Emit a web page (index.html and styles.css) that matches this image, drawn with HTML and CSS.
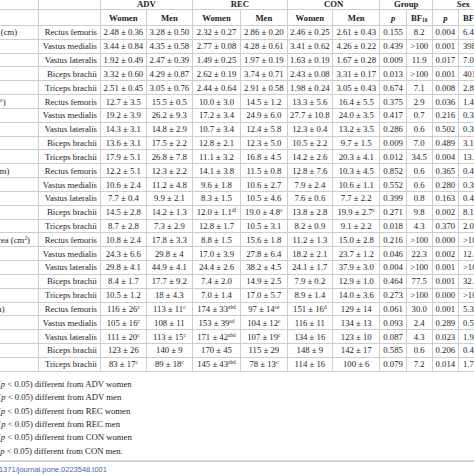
FILE: index.html
```html
<!DOCTYPE html>
<html lang="en">
<head>
<meta charset="utf-8">
<title>Muscle morphology table</title>
<link rel="stylesheet" href="styles.css">
</head>
<body>
<div class="sheet">
<table class="morph">
<colgroup>
<col class="c-label"><col class="c-muscle"><col class="c-w1"><col class="c-m1"><col class="c-w2"><col class="c-m2"><col class="c-w3"><col class="c-m3"><col class="c-p"><col class="c-bf"><col class="c-p2"><col class="c-bf2">
</colgroup>
<thead>
<tr class="h1"><th></th><th></th><th colspan="2">ADV</th><th colspan="2">REC</th><th colspan="2">CON</th><th colspan="2">Group</th><th colspan="2">Sex</th></tr>
<tr class="h2"><th></th><th></th><th>Women</th><th>Men</th><th>Women</th><th>Men</th><th>Women</th><th>Men</th><th><i>p</i></th><th>BF<sub>10</sub></th><th><i>p</i></th><th class="lft">BF<sub>10</sub></th></tr>
</thead>
<tbody>
<tr><td class="lbl">Muscle thickness (cm)</td><td class="mus">Rectus femoris</td><td>2.48 ± 0.36</td><td>3.28 ± 0.50</td><td>2.32 ± 0.27</td><td>2.86 ± 0.20</td><td>2.46 ± 0.25</td><td>2.61 ± 0.43</td><td>0.155</td><td>8.2</td><td>0.004</td><td class="lft">6.41</td></tr>
<tr><td class="lbl"></td><td class="mus">Vastus medialis</td><td>3.44 ± 0.84</td><td>4.35 ± 0.58</td><td>2.77 ± 0.08</td><td>4.28 ± 0.61</td><td>3.41 ± 0.62</td><td>4.26 ± 0.22</td><td>0.439</td><td>&gt;100</td><td>0.001</td><td class="lft">398</td></tr>
<tr><td class="lbl"></td><td class="mus">Vastus lateralis</td><td>1.92 ± 0.49</td><td>2.47 ± 0.39</td><td>1.49 ± 0.25</td><td>1.97 ± 0.19</td><td>1.63 ± 0.19</td><td>1.67 ± 0.28</td><td>0.009</td><td>11.9</td><td>0.017</td><td class="lft">7.06</td></tr>
<tr><td class="lbl"></td><td class="mus">Biceps brachii</td><td>3.32 ± 0.60</td><td>4.29 ± 0.87</td><td>2.62 ± 0.19</td><td>3.74 ± 0.71</td><td>2.43 ± 0.08</td><td>3.31 ± 0.17</td><td>0.013</td><td>&gt;100</td><td>0.001</td><td class="lft">401</td></tr>
<tr><td class="lbl"></td><td class="mus">Triceps brachii</td><td>2.51 ± 0.45</td><td>3.05 ± 0.76</td><td>2.44 ± 0.64</td><td>2.91 ± 0.58</td><td>1.98 ± 0.24</td><td>3.05 ± 0.43</td><td>0.674</td><td>7.1</td><td>0.008</td><td class="lft">2.83</td></tr>

<tr><td class="lbl">Pennation angle (°)</td><td class="mus">Rectus femoris</td><td>12.7 ± 3.5</td><td>15.5 ± 0.5</td><td>10.0 ± 3.0</td><td>14.5 ± 1.2</td><td>13.3 ± 5.6</td><td>16.4 ± 5.5</td><td>0.375</td><td>2.9</td><td>0.036</td><td class="lft">1.42</td></tr>
<tr><td class="lbl"></td><td class="mus">Vastus medialis</td><td>19.2 ± 3.9</td><td>26.2 ± 9.3</td><td>17.2 ± 3.4</td><td>24.9 ± 6.0</td><td>27.7 ± 10.8</td><td>24.0 ± 3.5</td><td>0.417</td><td>0.7</td><td>0.216</td><td class="lft">0.38</td></tr>
<tr><td class="lbl"></td><td class="mus">Vastus lateralis</td><td>14.3 ± 3.1</td><td>14.8 ± 2.9</td><td>10.7 ± 3.4</td><td>12.4 ± 5.8</td><td>12.3 ± 0.4</td><td>13.2 ± 3.5</td><td>0.286</td><td>0.6</td><td>0.502</td><td class="lft">0.31</td></tr>
<tr><td class="lbl"></td><td class="mus">Biceps brachii</td><td>13.6 ± 3.1</td><td>17.5 ± 2.2</td><td>12.8 ± 2.1</td><td>12.3 ± 5.0</td><td>10.5 ± 2.2</td><td>9.7 ± 1.5</td><td>0.009</td><td>7.0</td><td>0.489</td><td class="lft">3.17</td></tr>
<tr><td class="lbl"></td><td class="mus">Triceps brachii</td><td>17.9 ± 5.1</td><td>26.8 ± 7.8</td><td>11.1 ± 3.2</td><td>16.8 ± 4.5</td><td>14.2 ± 2.6</td><td>20.3 ± 4.1</td><td>0.012</td><td>34.5</td><td>0.004</td><td class="lft">13.1</td></tr>

<tr><td class="lbl">Fascicle length (cm)</td><td class="mus">Rectus femoris</td><td>12.2 ± 5.1</td><td>12.3 ± 2.2</td><td>14.1 ± 3.8</td><td>11.5 ± 0.8</td><td>12.8 ± 7.6</td><td>10.3 ± 4.5</td><td>0.852</td><td>0.6</td><td>0.365</td><td class="lft">0.42</td></tr>
<tr><td class="lbl"></td><td class="mus">Vastus medialis</td><td>10.6 ± 2.4</td><td>11.2 ± 4.8</td><td>9.6 ± 1.8</td><td>10.6 ± 2.7</td><td>7.9 ± 2.4</td><td>10.6 ± 1.1</td><td>0.552</td><td>0.6</td><td>0.280</td><td class="lft">0.37</td></tr>
<tr><td class="lbl"></td><td class="mus">Vastus lateralis</td><td>7.7 ± 0.4</td><td>9.9 ± 2.1</td><td>8.3 ± 1.5</td><td>10.5 ± 4.6</td><td>7.6 ± 0.6</td><td>7.7 ± 2.2</td><td>0.399</td><td>0.8</td><td>0.163</td><td class="lft">0.49</td></tr>
<tr><td class="lbl"></td><td class="mus">Biceps brachii</td><td>14.5 ± 2.8</td><td>14.2 ± 1.3</td><td>12.0 ± 1.1<sup>df</sup></td><td>19.0 ± 4.8<sup>c</sup></td><td>13.8 ± 2.8</td><td>19.9 ± 2.7<sup>c</sup></td><td>0.271</td><td>9.8</td><td>0.002</td><td class="lft">8.12</td></tr>
<tr><td class="lbl"></td><td class="mus">Triceps brachii</td><td>8.7 ± 2.8</td><td>7.3 ± 2.9</td><td>12.8 ± 1.7</td><td>10.5 ± 3.1</td><td>8.2 ± 0.9</td><td>9.1 ± 2.2</td><td>0.018</td><td>4.3</td><td>0.370</td><td class="lft">2.04</td></tr>

<tr><td class="lbl">Cross-sectional area (cm<sup>2</sup>)</td><td class="mus">Rectus femoris</td><td>10.8 ± 2.4</td><td>17.8 ± 3.3</td><td>8.8 ± 1.5</td><td>15.6 ± 1.8</td><td>11.2 ± 1.3</td><td>15.0 ± 2.8</td><td>0.216</td><td>&gt;100</td><td>0.000</td><td class="lft">&gt;100</td></tr>
<tr><td class="lbl"></td><td class="mus">Vastus medialis</td><td>24.3 ± 6.6</td><td>29.8 ± 4</td><td>17.0 ± 3.9</td><td>27.8 ± 6.4</td><td>18.2 ± 2.1</td><td>23.7 ± 1.2</td><td>0.046</td><td>22.3</td><td>0.002</td><td class="lft">12.4</td></tr>
<tr><td class="lbl"></td><td class="mus">Vastus lateralis</td><td>29.8 ± 4.1</td><td>44.9 ± 4.1</td><td>24.4 ± 2.6</td><td>38.2 ± 4.5</td><td>24.1 ± 1.7</td><td>37.9 ± 3.0</td><td>0.004</td><td>&gt;100</td><td>0.001</td><td class="lft">&gt;100</td></tr>
<tr><td class="lbl"></td><td class="mus">Biceps brachii</td><td>8.4 ± 1.7</td><td>17.7 ± 9.2</td><td>7.4 ± 2.0</td><td>14.9 ± 2.5</td><td>7.9 ± 0.2</td><td>12.9 ± 1.0</td><td>0.464</td><td>77.5</td><td>0.001</td><td class="lft">32.5</td></tr>
<tr><td class="lbl"></td><td class="mus">Triceps brachii</td><td>10.5 ± 1.2</td><td>18 ± 4.3</td><td>7.0 ± 1.4</td><td>17.0 ± 5.7</td><td>8.9 ± 1.4</td><td>14.0 ± 3.6</td><td>0.273</td><td>&gt;100</td><td>0.000</td><td class="lft">&gt;100</td></tr>

<tr><td class="lbl">Echo intensity (au)</td><td class="mus">Rectus femoris</td><td>116 ± 26<sup>c</sup></td><td>113 ± 11<sup>c</sup></td><td>174 ± 33<sup>abd</sup></td><td>97 ± 14<sup>ce</sup></td><td>151 ± 16<sup>d</sup></td><td>129 ± 14</td><td>0.061</td><td>30.0</td><td>0.001</td><td class="lft">5.32</td></tr>
<tr><td class="lbl"></td><td class="mus">Vastus medialis</td><td>105 ± 16<sup>c</sup></td><td>108 ± 11</td><td>153 ± 39<sup>ad</sup></td><td>104 ± 12<sup>c</sup></td><td>116 ± 11</td><td>134 ± 13</td><td>0.093</td><td>2.4</td><td>0.289</td><td class="lft">0.55</td></tr>
<tr><td class="lbl"></td><td class="mus">Vastus lateralis</td><td>111 ± 20<sup>c</sup></td><td>113 ± 15<sup>c</sup></td><td>171 ± 42<sup>abd</sup></td><td>107 ± 19<sup>c</sup></td><td>134 ± 16</td><td>123 ± 10</td><td>0.087</td><td>4.3</td><td>0.023</td><td class="lft">1.96</td></tr>
<tr><td class="lbl"></td><td class="mus">Biceps brachii</td><td>123 ± 26</td><td>140 ± 9</td><td>170 ± 45</td><td>115 ± 29</td><td>148 ± 9</td><td>142 ± 17</td><td>0.585</td><td>0.6</td><td>0.206</td><td class="lft">0.42</td></tr>
<tr><td class="lbl"></td><td class="mus">Triceps brachii</td><td>83 ± 17<sup>c</sup></td><td>89 ± 18<sup>c</sup></td><td>145 ± 43<sup>abd</sup></td><td>78 ± 13<sup>c</sup></td><td>114 ± 16</td><td>100 ± 6</td><td>0.079</td><td>7.2</td><td>0.014</td><td class="lft">1.71</td></tr>
</tbody>
</table>

<div class="notes">
<p><sup>a</sup>Significantly (<i>p</i> &lt; 0.05) different from ADV women</p>
<p><sup>b</sup>Significantly (<i>p</i> &lt; 0.05) different from ADV men</p>
<p><sup>c</sup>Significantly (<i>p</i> &lt; 0.05) different from REC women</p>
<p><sup>d</sup>Significantly (<i>p</i> &lt; 0.05) different from REC men</p>
<p><sup>e</sup>Significantly (<i>p</i> &lt; 0.05) different from CON women</p>
<p><sup>f</sup>Significantly (<i>p</i> &lt; 0.05) different from CON men.</p>
</div>
</div>
<div class="rule"></div>
<div class="doi"><a href="#">https://doi.org/10.1371/journal.pone.0223548.t001</a></div>
</body>
</html>
```
FILE: styles.css
```css
html, body {
  margin: 0;
  padding: 0;
  background: #ffffff;
  overflow: hidden;
}
body {
  font-family: "Liberation Serif", "Times New Roman", serif;
  font-size: 8.7px;
  color: #1d1d1d;
  width: 474px;
  height: 474px;
}
.sheet {
  margin-left: -63px;
  width: 600px;
}
.morph {
  border-collapse: collapse;
  table-layout: fixed;
  width: 557px;
  margin-top: -7px;
}
.c-label { width: 100.7px; }
.c-muscle { width: 62.3px; }
.c-w1 { width: 45.7px; }
.c-m1 { width: 46.3px; }
.c-w2 { width: 48px; }
.c-m2 { width: 46.7px; }
.c-w3 { width: 45.3px; }
.c-m3 { width: 47.5px; }
.c-p { width: 26.2px; }
.c-bf { width: 26.1px; }
.c-p2 { width: 26.2px; }
.c-bf2 { width: 36px; }

.morph th, .morph td {
  border: 1px solid #cdcdcd;
  padding: 0 2px;
  text-align: center;
  white-space: nowrap;
  overflow: hidden;
  line-height: 10px;
}
.morph th { font-weight: bold; }
.h1 th { height: 15px; vertical-align: bottom; padding-bottom: 0; }
.h2 th { height: 15px; }
.morph tbody td { height: 12.84px; padding-top: 0; padding-bottom: 0; }
.morph td.lbl { text-align: left; padding-left: 0.5px; }
.morph td.mus { text-align: right; padding-right: 3px; }
.morph .lft { text-align: left; padding-left: 4px; }
.morph sub {
  font-size: 0.62em;
  vertical-align: -0.25em;
  line-height: 0;
}
sup {
  font-size: 0.62em;
  vertical-align: 0.5em;
  line-height: 0;
}
.notes {
  margin-top: 6px;
  margin-left: 11.5px;
  line-height: 13.4px;
  font-family: "Liberation Serif", "Times New Roman", serif;
}
.notes p {
  margin: 0;
  white-space: nowrap;
}
.rule {
  height: 2px;
  background: #d4d4d4;
  margin-top: 2px;
}
.doi {
  margin-top: 3px;
  margin-left: -59px;
  font-family: "Liberation Sans", Arial, sans-serif;
  font-size: 7.5px;
  line-height: 10px;
  white-space: nowrap;
}
.doi a {
  color: #3d68b0;
  text-decoration: none;
}
```
